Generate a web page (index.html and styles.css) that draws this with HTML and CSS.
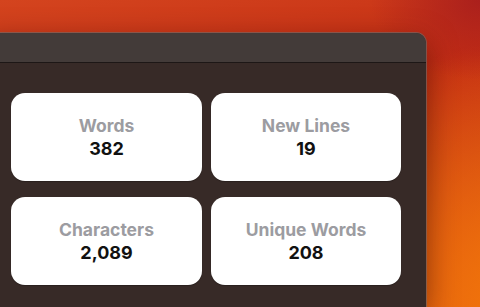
FILE: index.html
```html
<!DOCTYPE html>
<html lang="en">
<head>
    <meta charset="UTF-8">
    <meta name="viewport" content="width=device-width, initial-scale=1.0">
    <title>Word Stats</title>
    <link rel="stylesheet" href="styles.css">
</head>
<body>
    <div class="window">
        <div class="titlebar"></div>
        <div class="content">
            <div class="stats">
                <div class="card">
                    <div class="label">Words</div>
                    <div class="value">382</div>
                </div>
                <div class="card">
                    <div class="label">New Lines</div>
                    <div class="value">19</div>
                </div>
                <div class="card">
                    <div class="label">Characters</div>
                    <div class="value">2,089</div>
                </div>
                <div class="card">
                    <div class="label">Unique Words</div>
                    <div class="value">208</div>
                </div>
            </div>
        </div>
    </div>
</body>
</html>
```

FILE: styles.css
```css
html, body {
    margin: 0;
    padding: 0;
}
body {
    width: 480px;
    height: 307px;
    overflow: hidden;
    font-family: Inter, "Liberation Sans", Arial, sans-serif;
    background:
        radial-gradient(ellipse 110px 80px at 480px 0px, rgba(160, 24, 30, 0.75), rgba(160, 24, 30, 0) 100%),
        radial-gradient(ellipse 240px 260px at 520px 300px, #f27608 0%, rgba(242, 118, 8, 0) 100%),
        linear-gradient(170deg, #d4441e 0%, #c42e14 35%, #cc3c16 60%, #e0561a 100%);
}
.window {
    margin-top: 33px;
    margin-left: -20px;
    width: 446px;
    height: 274px;
    border-radius: 10px 10px 0 0;
    background-color: #372a27;
    box-shadow: 0 0 0 1px rgba(120, 100, 95, 0.7), 0 10px 30px rgba(60, 10, 0, 0.55);
    overflow: hidden;
}
.titlebar {
    height: 29px;
    background-color: #433b39;
    border-bottom: 1px solid #1d1716;
}
.content {
    padding: 30px 25px 0 31px;
}
.stats {
    display: grid;
    grid-template-columns: 191px 190px;
    grid-auto-rows: 88px;
    column-gap: 9px;
    row-gap: 16px;
}
.card {
    background-color: #fff;
    border-radius: 14px;
    display: flex;
    flex-direction: column;
    align-items: center;
    justify-content: center;
    gap: 1px;
    box-shadow: 0 1px 1px rgba(0, 0, 0, 0.25);
}
.label {
    font-size: 17.5px;
    font-weight: 700;
    color: #9c9ca1;
    line-height: 22px;
}
.value {
    font-size: 18px;
    font-weight: 700;
    color: #111;
    line-height: 22px;
}
```
